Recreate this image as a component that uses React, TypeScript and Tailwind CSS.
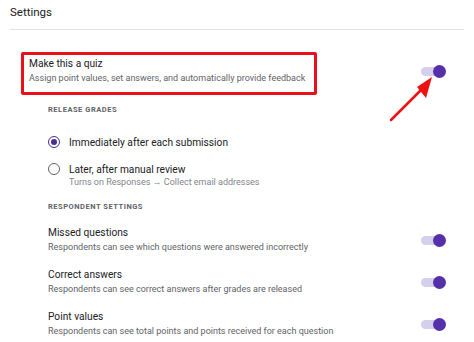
import React from "react";

const font = { fontFamily: "Roboto, 'Noto Sans', Arial, sans-serif" };

function Toggle() {
  return (
    <div className="relative w-[25px] h-[13px] flex items-center shrink-0">
      <div className="w-[20px] h-[9px] rounded-full bg-[#d6cfec]" />
      <div className="absolute right-0 top-0 w-[13px] h-[13px] rounded-full bg-[#5531a9]" />
    </div>
  );
}

function Radio({ checked }: { checked?: boolean }) {
  return (
    <div
      className={`w-[12px] h-[12px] rounded-full border-[1.5px] flex items-center justify-center shrink-0 ${
        checked ? "border-[#4a2d8f]" : "border-[#5f6368]"
      }`}
    >
      {checked && <div className="w-[6px] h-[6px] rounded-full bg-[#4a2d8f]" />}
    </div>
  );
}

function SettingRow({ title, sub }: { title: string; sub: string }) {
  return (
    <div className="flex items-center justify-between h-[29px] mb-[13px] pr-[28px]">
      <div>
        <div className="text-[10.2px] leading-[15px] text-[#202124]">{title}</div>
        <div className="text-[9px] leading-[14px] text-[#5f6368]">{sub}</div>
      </div>
      <div className="mt-[2px]">
        <Toggle />
      </div>
    </div>
  );
}

function SectionLabel({ children }: { children: string }) {
  return (
    <div className="text-[7.5px] font-bold tracking-[0.07em] text-[#5f6368] leading-[14px]">
      {children}
    </div>
  );
}

export default function App() {
  return (
    <div className="relative w-[474px] h-[342px] bg-white overflow-hidden" style={font}>
      <div className="px-[10px]">
        <div className="h-[30px] border-b border-[#e3e3e3] text-[11.5px] leading-[16px] text-[#202124] pt-[4px]">
          Settings
        </div>
      </div>

      <div className="flex items-center justify-between mt-[22px] pl-[21px] pr-[28px]">
        <div className="w-[296px] h-[43px] border-[3px] border-[#e8101a] rounded-[2px] pl-[5px] pt-[1px]">
          <div className="text-[10.2px] leading-[15px] text-[#202124]">Make this a quiz</div>
          <div className="text-[9px] leading-[14px] text-[#5f6368]">
            Assign point values, set answers, and automatically provide feedback
          </div>
        </div>
        <div className="-mt-[5px]">
          <Toggle />
        </div>
      </div>

      <div className="pl-[48px]">
        <div className="h-[30px] flex items-center">
          <SectionLabel>RELEASE GRADES</SectionLabel>
        </div>

        <div className="flex items-center gap-[9px] h-[20px] mt-[7px]">
          <Radio checked />
          <span className="text-[10.2px] leading-[15px] text-[#202124]">
            Immediately after each submission
          </span>
        </div>

        <div className="flex items-center gap-[9px] h-[14px] mt-[10px]">
          <Radio />
          <span className="text-[10.2px] leading-[15px] text-[#202124]">
            Later, after manual review
          </span>
        </div>
        <div className="pl-[21px] h-[13px] text-[9px] leading-[13px] text-[#80868b]">
          Turns on Responses → Collect email addresses
        </div>

        <div className="h-[14px] mt-[11px] flex items-center">
          <SectionLabel>RESPONDENT SETTINGS</SectionLabel>
        </div>

        <div className="mt-[11px]">
          <SettingRow
            title="Missed questions"
            sub="Respondents can see which questions were answered incorrectly"
          />
          <SettingRow
            title="Correct answers"
            sub="Respondents can see correct answers after grades are released"
          />
          <SettingRow
            title="Point values"
            sub="Respondents can see total points and points received for each question"
          />
        </div>
      </div>

      <svg className="absolute left-0 top-0" width="474" height="342" viewBox="0 0 474 342">
        <line x1="391" y1="120" x2="421" y2="90" stroke="#ee1111" strokeWidth="2.5" strokeLinecap="round" />
        <polygon points="432,77 426,98 417,87" fill="#ee1111" />
      </svg>
    </div>
  );
}
